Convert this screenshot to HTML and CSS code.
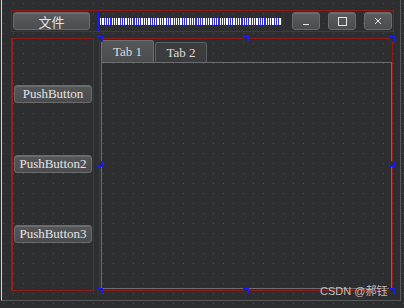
FILE: index.html
```html
<!DOCTYPE html>
<html>
<head>
<meta charset="utf-8">
<link rel="stylesheet" href="styles.css">
</head>
<body>
<div class="form">
  <div class="toolbar">
    <button class="btn menu">文件</button>
    <div class="progress"><div class="stripes"></div></div>
    <div class="winbtns">
      <button class="btn win"><svg width="8" height="8" viewBox="0 0 8 8"><line x1="1" y1="7.5" x2="7" y2="7.5" stroke="#e6e6e6" stroke-width="1"/></svg></button>
      <button class="btn win"><svg width="10" height="10" viewBox="0 0 10 10"><rect x="1.5" y="1.5" width="8" height="8" fill="none" stroke="#e6e6e6" stroke-width="1"/></svg></button>
      <button class="btn win"><svg width="8" height="8" viewBox="0 0 8 8"><path d="M1 1L7 7M7 1L1 7" stroke="#e6e6e6" stroke-width="1"/></svg></button>
    </div>
  </div>
  <div class="main">
    <div class="left">
      <button class="btn push">PushButton</button>
      <button class="btn push">PushButton2</button>
      <button class="btn push">PushButton3</button>
    </div>
    <div class="tabwidget">
      <div class="tabbar">
        <div class="tab active">Tab 1</div>
        <div class="tab">Tab 2</div>
      </div>
      <div class="pane"></div>
      <span class="handle h-l h-t"></span>
      <span class="handle h-c h-t"></span>
      <span class="handle h-r h-t"></span>
      <span class="handle h-l h-m"></span>
      <span class="handle h-r h-m"></span>
      <span class="handle h-l h-b"></span>
      <span class="handle h-c h-b"></span>
      <span class="handle h-r h-b"></span>
    </div>
  </div>
</div>
<div class="watermark">CSDN @郝钰</div>
</body>
</html>
```

FILE: styles.css
```css
html, body {
  margin: 0;
  padding: 0;
}
body {
  width: 404px;
  height: 308px;
  overflow: hidden;
  position: relative;
  background-color: #2d2e30;
  background-image: radial-gradient(circle at 3.5px 3.5px, #4b4c4f 0.75px, transparent 0.8px);
  background-size: 10px 10px;
  font-family: "Liberation Serif", "Noto Sans CJK SC", serif;
}
.form {
  box-sizing: border-box;
  margin-left: 1px;
  width: 400px;
  height: 301px;
  border-left: 1px solid #d6d6d6;
  border-right: 1px solid #58595b;
  border-bottom: 1px solid #58595b;
  padding: 10px 0 0 9px;
}
.toolbar {
  box-sizing: border-box;
  width: 383px;
  height: 22px;
  border: 1px solid #8e1b1b;
  padding: 0 1px;
  display: flex;
  align-items: center;
}
.btn {
  box-sizing: border-box;
  margin: 0;
  padding: 0;
  height: 18px;
  border: 1px solid #6a6b6d;
  border-radius: 3px;
  background: linear-gradient(#5b5c5e, #4b4c4e);
  box-shadow: inset 0 1px 0 #6c6d6f;
  color: #e4e4e4;
  display: flex;
  align-items: center;
  justify-content: center;
}
.menu {
  width: 77px;
  font-family: "Noto Sans CJK SC", sans-serif;
  font-size: 13px;
  line-height: 1;
}
.progress {
  box-sizing: border-box;
  margin-left: 8px;
  width: 186px;
  height: 20px;
  border-left: 1px solid #1a1aff;
  border-right: 1px solid #1a1aff;
  padding: 0 1px;
  display: flex;
  align-items: center;
}
.stripes {
  flex: 1;
  height: 7px;
  background: repeating-linear-gradient(90deg, #ffffff 0 1.2px, #2a2aff 1.2px 2.3px);
}
.winbtns {
  margin-left: auto;
  display: flex;
  gap: 8px;
}
.win {
  width: 28px;
}
.win svg {
  display: block;
}
.main {
  margin-top: 6px;
  display: flex;
}
.left {
  box-sizing: border-box;
  width: 83px;
  height: 253px;
  border: 1px solid #8e1b1b;
  border-left: 2px solid #9a1c1c;
  padding: 46px 0 0 1px;
  display: flex;
  flex-direction: column;
  gap: 52px;
}
.push {
  width: 78px;
  font-family: "Liberation Serif", serif;
  font-size: 13px;
  background: linear-gradient(#555658, #4a4b4d);
}
.tabwidget {
  position: relative;
  box-sizing: border-box;
  margin-left: 5px;
  width: 294px;
  height: 253px;
  border: 1px solid #8e1b1b;
  padding: 1px 0 1px 1px;
  display: flex;
  flex-direction: column;
}
.tabbar {
  height: 22px;
  display: flex;
  align-items: flex-end;
  gap: 1px;
}
.tab {
  box-sizing: border-box;
  width: 52px;
  height: 20px;
  border: 1px solid #5e5f61;
  border-bottom: none;
  border-radius: 3px 3px 0 0;
  background: #3b3c3e;
  color: #dcdcdc;
  font-size: 13px;
  display: flex;
  align-items: center;
  justify-content: center;
}
.tab.active {
  width: 53px;
  height: 22px;
  border-color: #6e6f71;
  background: linear-gradient(#555658, #4b4c4e);
}
.pane {
  flex: 1;
  border: 1px solid #6b6c6e;
}
.handle {
  position: absolute;
  box-sizing: border-box;
  width: 6px;
  height: 6px;
  border: 1px solid #1a1aff;
  background: #2d2e30;
}
.h-l { left: -3px; }
.h-c { left: 143px; }
.h-r { left: 289px; }
.h-t { top: -3px; }
.h-m { top: 122px; }
.h-b { top: 249px; }
.watermark {
  position: absolute;
  left: 320px;
  top: 284px;
  font-family: "Liberation Sans", "Noto Sans CJK SC", sans-serif;
  font-size: 11px;
  line-height: 14px;
  color: rgba(220, 220, 220, 0.85);
  white-space: nowrap;
}
```
